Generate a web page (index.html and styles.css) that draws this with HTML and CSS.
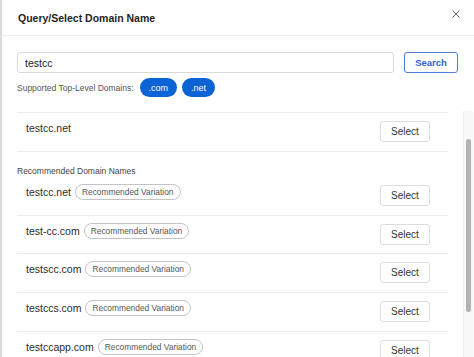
FILE: index.html
```html
<!DOCTYPE html>
<html lang="en">

<head>
    <meta charset="UTF-8">
    <meta name="viewport" content="width=device-width, initial-scale=1.0">
    <title>Query/Select Domain Name</title>
    <link rel="stylesheet" href="styles.css">
</head>

<body>
    <div class="dialog">
        <div class="dlg-head">
            <h2 class="dlg-title">Query/Select Domain Name</h2>
            <button class="close" type="button">
                <svg width="8" height="8" viewBox="0 0 8 8">
                    <path d="M0.5 0.5 L7.5 7.5 M7.5 0.5 L0.5 7.5" stroke="#666" stroke-width="1" fill="none" />
                </svg>
            </button>
        </div>

        <div class="dlg-body">
            <div class="search-row">
                <input class="search-input" type="text" value="testcc">
                <button class="btn-search" type="button">Search</button>
            </div>
            <div class="tld-row">
                <span class="tld-label">Supported Top-Level Domains:</span>
                <span class="tld">.com</span>
                <span class="tld">.net</span>
            </div>
        </div>

        <div class="scroll-area">
            <div class="list">
                <div class="row first">
                    <div class="name-wrap"><span class="name">testcc.net</span></div>
                    <button class="btn-select" type="button">Select</button>
                </div>

                <div class="list-heading">Recommended Domain Names</div>

                <div class="row">
                    <div class="name-wrap"><span class="name">testcc.net</span><span class="tag">Recommended Variation</span></div>
                    <button class="btn-select" type="button">Select</button>
                </div>
                <div class="row">
                    <div class="name-wrap"><span class="name">test-cc.com</span><span class="tag">Recommended Variation</span></div>
                    <button class="btn-select" type="button">Select</button>
                </div>
                <div class="row">
                    <div class="name-wrap"><span class="name">testscc.com</span><span class="tag">Recommended Variation</span></div>
                    <button class="btn-select" type="button">Select</button>
                </div>
                <div class="row">
                    <div class="name-wrap"><span class="name">testccs.com</span><span class="tag">Recommended Variation</span></div>
                    <button class="btn-select" type="button">Select</button>
                </div>
                <div class="row">
                    <div class="name-wrap"><span class="name">testccapp.com</span><span class="tag">Recommended Variation</span></div>
                    <button class="btn-select" type="button">Select</button>
                </div>
            </div>
            <div class="scrollbar">
                <div class="thumb"></div>
            </div>
        </div>
    </div>
</body>

</html>
```

FILE: styles.css
```css
* {
    margin: 0;
    padding: 0;
    box-sizing: border-box;
}

body {
    height: 100vh;
    overflow: hidden;
    background-color: #dcdcdc;
    font-family: 'Liberation Sans', Arial, sans-serif;
    color: #333;
}

.dialog {
    margin-left: 2px;
    height: 100%;
    background-color: #ffffff;
}

.dlg-head {
    height: 36px;
    display: flex;
    justify-content: space-between;
    align-items: center;
    padding: 0 14px 0 16px;
    border-bottom: 1px solid #eeeeee;
}

.dlg-title {
    font-size: 10.5px;
    font-weight: bold;
    color: #1f1f1f;
}

.close {
    align-self: flex-start;
    margin-top: 10px;
    width: 8px;
    height: 8px;
    border: none;
    background: none;
    display: flex;
}

.dlg-body {
    padding: 16px 16px 0 15px;
}

.search-row {
    display: flex;
    gap: 10px;
}

.search-input {
    flex: 1;
    height: 21px;
    border: 1px solid #d9d9d9;
    border-radius: 3px;
    padding-left: 7px;
    font-family: inherit;
    font-size: 10.5px;
    color: #222;
    outline: none;
}

.btn-search {
    width: 54px;
    height: 21px;
    border: 1px solid #4f7ee0;
    border-radius: 3px;
    background-color: #ffffff;
    color: #2c62d8;
    font-family: inherit;
    font-size: 9.5px;
    font-weight: bold;
}

.tld-row {
    margin-top: 5px;
    display: flex;
    align-items: center;
    gap: 5px;
}

.tld-label {
    font-size: 8.5px;
    color: #555;
    margin-right: 1px;
}

.tld {
    height: 19px;
    padding: 0 9px;
    border-radius: 10px;
    background-color: #0b63d6;
    color: #ffffff;
    font-size: 9px;
    display: flex;
    align-items: center;
}

.scroll-area {
    margin-top: 15px;
    display: flex;
}

.list {
    flex: 0 0 431px;
    margin-left: 15px;
}

.row {
    display: flex;
    align-items: flex-start;
    padding: 8px 18px 8.75px 9px;
    border-bottom: 1px solid #ececec;
}

.row.first {
    border-top: 1px solid #ececec;
}

.name-wrap {
    display: flex;
    align-items: center;
    gap: 4px;
    height: 14px;
}

.name {
    font-size: 10.5px;
    color: #2b2b2b;
}

.tag {
    height: 16px;
    padding: 0 6px;
    border: 1px solid #c4c4c4;
    border-radius: 8px;
    font-size: 8.4px;
    color: #555;
    display: flex;
    align-items: center;
}

.btn-select {
    margin-left: auto;
    width: 50px;
    height: 21px;
    border: 1px solid #dddddd;
    border-radius: 3px;
    background-color: #ffffff;
    font-family: inherit;
    font-size: 10px;
    color: #333;
}

.list-heading {
    padding-top: 13px;
    line-height: 12px;
    font-size: 8.5px;
    color: #444;
}

.scrollbar {
    margin-left: auto;
    margin-right: 1px;
    width: 10px;
    margin-top: -1px;
    height: 260px;
    background-color: #f8f8f8;
    border-left: 1px solid #efefef;
    padding-top: 28px;
}

.thumb {
    margin-left: 2px;
    width: 5px;
    height: 173px;
    border-radius: 3px;
    background-color: #b3b3b3;
}
```
